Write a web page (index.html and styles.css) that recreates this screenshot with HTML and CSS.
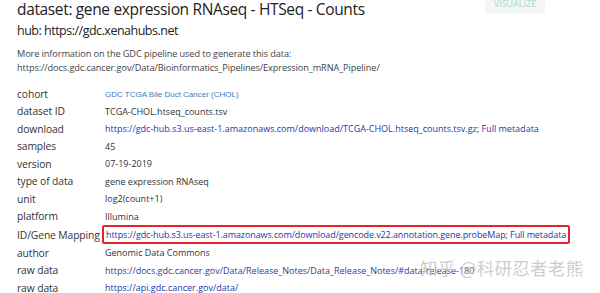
FILE: index.html
```html
<!DOCTYPE html>
<html lang="en">
<head>
    <meta charset="UTF-8">
    <title>Dataset</title>
    <link rel="stylesheet" href="styles.css">
</head>
<body>
    <div class="page">
        <div class="header">
            <h2 class="title">dataset: gene expression RNAseq - HTSeq - Counts</h2>
            <span class="visualize">VISUALIZE</span>
        </div>
        <h3 class="hub">hub: https://gdc.xenahubs.net</h3>
        <p class="info">More information on the GDC pipeline used to generate this data:<br>https://docs.gdc.cancer.gov/Data/Bioinformatics_Pipelines/Expression_mRNA_Pipeline/</p>

        <table class="meta">
            <tr><td class="key">cohort</td><td><a class="cohort">GDC TCGA Bile Duct Cancer (CHOL)</a></td></tr>
            <tr><td class="key">dataset ID</td><td>TCGA-CHOL.htseq_counts.tsv</td></tr>
            <tr><td class="key">download</td><td><a>https://gdc-hub.s3.us-east-1.amazonaws.com/download/TCGA-CHOL.htseq_counts.tsv.gz; Full metadata</a></td></tr>
            <tr><td class="key">samples</td><td>45</td></tr>
            <tr><td class="key">version</td><td>07-19-2019</td></tr>
            <tr><td class="key">type of data</td><td>gene expression RNAseq</td></tr>
            <tr><td class="key">unit</td><td>log2(count+1)</td></tr>
            <tr><td class="key">platform</td><td>Illumina</td></tr>
            <tr><td class="key">ID/Gene Mapping</td><td><a class="boxed">https://gdc-hub.s3.us-east-1.amazonaws.com/download/gencode.v22.annotation.gene.probeMap; Full metadata</a></td></tr>
            <tr><td class="key">author</td><td>Genomic Data Commons</td></tr>
            <tr><td class="key">raw data</td><td><a class="plain">https://docs.gdc.cancer.gov/Data/Release_Notes/Data_Release_Notes/#data-release-180</a></td></tr>
            <tr><td class="key">raw data</td><td><a>https://api.gdc.cancer.gov/data/</a></td></tr>
        </table>
    </div>

    <div class="watermark">知乎 @科研忍者老熊</div>
</body>
</html>
```

FILE: styles.css
```css
body {
    margin: 0;
    font-family: "Open Sans", "Noto Sans", sans-serif;
    color: #333;
    background: #fff;
    overflow: hidden;
}
.page {
    padding-left: 17px;
    width: 560px;
}
.header {
    display: flex;
    justify-content: space-between;
    align-items: flex-start;
    margin-top: -2px;
}
.title {
    margin: 0;
    font-size: 15.5px;
    font-weight: normal;
    letter-spacing: -0.35px;
    line-height: 22px;
    color: #222;
}
.visualize {
    margin-top: 2px;
    margin-right: 32px;
    width: 60px;
    height: 14px;
    background: #f5f6f6;
    color: #a6d9cf;
    font-size: 9px;
    line-height: 8px;
    text-align: center;
    overflow: hidden;
}
.hub {
    margin: 2px 0 0;
    font-size: 12.5px;
    font-weight: normal;
    letter-spacing: -0.5px;
    line-height: 18px;
    color: #222;
}
.info {
    margin: 7px 0 0;
    font-size: 9.2px;
    letter-spacing: -0.1px;
    line-height: 14px;
    color: #444;
}
.meta {
    border-collapse: collapse;
    margin-top: 10px;
    font-size: 9px;
}
.meta td {
    padding: 0;
    height: 17.5px;
    white-space: nowrap;
    vertical-align: middle;
}
.meta .key {
    width: 88px;
    min-width: 88px;
    font-size: 10.3px;
    letter-spacing: -0.1px;
    color: #333;
}
.meta a {
    color: #2b35a8;
}
.meta .cohort {
    font-family: "Liberation Sans", Arial, sans-serif;
    font-size: 8px;
    color: #3d7bc0;
}
.meta .plain {
    color: #3a3a8a;
}
.meta .boxed {
    display: inline-block;
    border: 2px solid #e0262a;
    border-radius: 2px;
    padding: 1px 2px;
    margin-left: -3px;
    letter-spacing: -0.1px;
    line-height: 13px;
}
.watermark {
    position: absolute;
    left: 420px;
    top: 255px;
    font-family: "Noto Sans CJK SC", sans-serif;
    font-size: 17.5px;
    color: rgba(195, 195, 195, 0.85);
    letter-spacing: 0.3px;
}
```
